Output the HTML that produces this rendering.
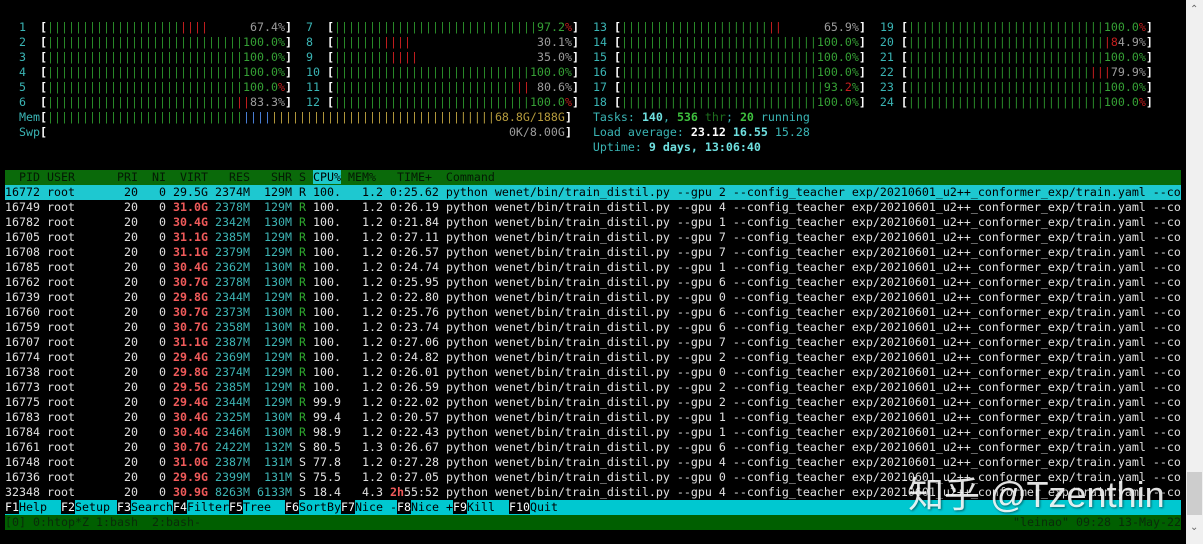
<!DOCTYPE html>
<html><head><meta charset="utf-8"><style>
html,body{margin:0;padding:0;background:#000;width:1203px;height:544px;overflow:hidden;position:relative}
.term{position:absolute;left:5px;top:5px;font-family:"DejaVu Sans Mono","Liberation Mono",monospace;font-size:11.63px;line-height:15px;color:#e0e0e0}
.l{height:15px;white-space:pre;width:1176px;overflow:hidden}
.g{color:#2a8c2a}.r{color:#c41e1e}.t{color:#9c9c9c}.c{color:#3ab4b4}.w{color:#fff;font-weight:bold}
.b{color:#4a80d8}.y{color:#b49a3c}.gt{color:#35a035}.yt{color:#b49a3c}
.cb{color:#6fe0e0;font-weight:bold}.gb{color:#3ec03e;font-weight:bold}.gd{color:#1e6e1e}.wb{color:#fff;font-weight:bold}
.v{color:#f05a5a;font-weight:bold}.m{color:#3cb4b4}.rg{color:#2ea82e}
.hdr{background:#0a6a0a;color:#041a04}.hc{background:#1ec8c8;color:#000}
.sel{background:#1ec8d0;color:#000}
.fk{color:#fff}.fl{background:#00c8d0;color:#000}
.tm{background:#005f00;color:#0a2a0a;display:flex;justify-content:space-between}
.sb{position:absolute;left:1186px;top:0;width:17px;height:544px;background:#f0f0f0}
.wm{position:absolute;left:908px;top:466px;font-family:"Liberation Sans","Noto Sans CJK SC",sans-serif;font-size:36px;color:rgba(255,255,255,0.88);text-shadow:1px 1px 2px rgba(0,0,0,0.5);white-space:nowrap}
</style></head><body>
<div class="term">
<div class="l"> </div>
<div class="l">  <span class="c">1</span>  <span class="w">[</span><span class="g">|||||||||||||||||||</span><span class="r">||||</span>      <span class="t">67.4%</span><span class="w">]</span>  <span class="c">7</span>  <span class="w">[</span><span class="g">|||||||||||||||||||||||||||||</span><span class="gt">97.2</span><span class="r">%</span><span class="w">]</span>  <span class="c">13</span> <span class="w">[</span><span class="g">|||||||||||||||||||||</span><span class="r">||</span>      <span class="t">65.9%</span><span class="w">]</span>  <span class="c">19</span> <span class="w">[</span><span class="g">||||||||||||||||||||||||||||</span><span class="gt">100.0</span><span class="r">%</span><span class="w">]</span></div>
<div class="l">  <span class="c">2</span>  <span class="w">[</span><span class="g">||||||||||||||||||||||||||||</span><span class="gt">100.0%</span><span class="w">]</span>  <span class="c">8</span>  <span class="w">[</span><span class="g">|||||||</span><span class="r">||||</span>                  <span class="t">30.1%</span><span class="w">]</span>  <span class="c">14</span> <span class="w">[</span><span class="g">||||||||||||||||||||||||||||</span><span class="gt">100.0%</span><span class="w">]</span>  <span class="c">20</span> <span class="w">[</span><span class="g">||||||||||||||||||||||||||||</span><span class="r">|8</span><span class="t">4.9%</span><span class="w">]</span></div>
<div class="l">  <span class="c">3</span>  <span class="w">[</span><span class="g">||||||||||||||||||||||||||||</span><span class="gt">100.0%</span><span class="w">]</span>  <span class="c">9</span>  <span class="w">[</span><span class="g">||||||||</span><span class="r">||||</span>                 <span class="t">35.0%</span><span class="w">]</span>  <span class="c">15</span> <span class="w">[</span><span class="g">||||||||||||||||||||||||||||</span><span class="gt">100.0%</span><span class="w">]</span>  <span class="c">21</span> <span class="w">[</span><span class="g">||||||||||||||||||||||||||||</span><span class="gt">100.0%</span><span class="w">]</span></div>
<div class="l">  <span class="c">4</span>  <span class="w">[</span><span class="g">||||||||||||||||||||||||||||</span><span class="gt">100.0%</span><span class="w">]</span>  <span class="c">10</span> <span class="w">[</span><span class="g">||||||||||||||||||||||||||||</span><span class="gt">100.0%</span><span class="w">]</span>  <span class="c">16</span> <span class="w">[</span><span class="g">||||||||||||||||||||||||||||</span><span class="gt">100.0%</span><span class="w">]</span>  <span class="c">22</span> <span class="w">[</span><span class="g">||||||||||||||||||||||||||</span><span class="r">|||</span><span class="t">79.9%</span><span class="w">]</span></div>
<div class="l">  <span class="c">5</span>  <span class="w">[</span><span class="g">||||||||||||||||||||||||||||</span><span class="gt">100.0</span><span class="r">%</span><span class="w">]</span>  <span class="c">11</span> <span class="w">[</span><span class="g">||||||||||||||||||||||||||</span><span class="r">||</span> <span class="t">80.6%</span><span class="w">]</span>  <span class="c">17</span> <span class="w">[</span><span class="g">|||||||||||||||||||||||||||||</span><span class="gt">93.</span><span class="r">2</span><span class="gt">%</span><span class="w">]</span>  <span class="c">23</span> <span class="w">[</span><span class="g">||||||||||||||||||||||||||||</span><span class="gt">100.0%</span><span class="w">]</span></div>
<div class="l">  <span class="c">6</span>  <span class="w">[</span><span class="g">|||||||||||||||||||||||||||</span><span class="r">||</span><span class="t">83.3%</span><span class="w">]</span>  <span class="c">12</span> <span class="w">[</span><span class="g">||||||||||||||||||||||||||||</span><span class="gt">100.0</span><span class="r">%</span><span class="w">]</span>  <span class="c">18</span> <span class="w">[</span><span class="g">||||||||||||||||||||||||||||</span><span class="gt">100.0%</span><span class="w">]</span>  <span class="c">24</span> <span class="w">[</span><span class="g">||||||||||||||||||||||||||||</span><span class="gt">100.0</span><span class="r">%</span><span class="w">]</span></div>
<div class="l">  <span class="c">Mem</span><span class="w">[</span><span class="g">||||||||||||||||||||||||||||</span><span class="b">||||</span><span class="y">||||||||||||||||||||||||||||||||</span><span class="yt">68.8G/188G</span><span class="w">]</span>   <span class="c">Tasks: </span><span class="cb">140</span><span class="c">, </span><span class="gb">536</span><span class="gd"> thr</span><span class="c">; </span><span class="gb">20</span><span class="c"> running</span></div>
<div class="l">  <span class="c">Swp</span><span class="w">[</span>                                                                  <span class="t">0K/8.00G</span><span class="w">]</span>   <span class="c">Load average: </span><span class="wb">23.12 </span><span class="cb">16.55 </span><span class="c">15.28</span></div>
<div class="l">                                                                                    <span class="c">Uptime: </span><span class="cb">9 days, 13:06:40</span></div>
<div class="l"> </div>
<div class="l hdr">  PID USER      PRI  NI  VIRT   RES   SHR S <span class="hc">CPU%</span> MEM%   TIME+  Command</div>
<div class="l sel">16772 root       20   0 29.5G 2374M  129M R 100.   1.2 0:25.62 python wenet/bin/train_distil.py --gpu 2 --config_teacher exp/20210601_u2++_conformer_exp/train.yaml --co</div>
<div class="l">16749 root       20   0 <span class="v">31.0G</span> <span class="m">2378M</span>  <span class="m">129M</span> <span class="rg">R</span> 100.   1.2 0:26.19 python wenet/bin/train_distil.py --gpu 4 --config_teacher exp/20210601_u2++_conformer_exp/train.yaml --co</div>
<div class="l">16782 root       20   0 <span class="v">30.4G</span> <span class="m">2342M</span>  <span class="m">130M</span> <span class="rg">R</span> 100.   1.2 0:21.84 python wenet/bin/train_distil.py --gpu 1 --config_teacher exp/20210601_u2++_conformer_exp/train.yaml --co</div>
<div class="l">16705 root       20   0 <span class="v">31.1G</span> <span class="m">2385M</span>  <span class="m">129M</span> <span class="rg">R</span> 100.   1.2 0:27.11 python wenet/bin/train_distil.py --gpu 7 --config_teacher exp/20210601_u2++_conformer_exp/train.yaml --co</div>
<div class="l">16708 root       20   0 <span class="v">31.1G</span> <span class="m">2379M</span>  <span class="m">129M</span> <span class="rg">R</span> 100.   1.2 0:26.57 python wenet/bin/train_distil.py --gpu 7 --config_teacher exp/20210601_u2++_conformer_exp/train.yaml --co</div>
<div class="l">16785 root       20   0 <span class="v">30.4G</span> <span class="m">2362M</span>  <span class="m">130M</span> <span class="rg">R</span> 100.   1.2 0:24.74 python wenet/bin/train_distil.py --gpu 1 --config_teacher exp/20210601_u2++_conformer_exp/train.yaml --co</div>
<div class="l">16762 root       20   0 <span class="v">30.7G</span> <span class="m">2378M</span>  <span class="m">130M</span> <span class="rg">R</span> 100.   1.2 0:25.95 python wenet/bin/train_distil.py --gpu 6 --config_teacher exp/20210601_u2++_conformer_exp/train.yaml --co</div>
<div class="l">16739 root       20   0 <span class="v">29.8G</span> <span class="m">2344M</span>  <span class="m">129M</span> <span class="rg">R</span> 100.   1.2 0:22.80 python wenet/bin/train_distil.py --gpu 0 --config_teacher exp/20210601_u2++_conformer_exp/train.yaml --co</div>
<div class="l">16760 root       20   0 <span class="v">30.7G</span> <span class="m">2373M</span>  <span class="m">130M</span> <span class="rg">R</span> 100.   1.2 0:25.76 python wenet/bin/train_distil.py --gpu 6 --config_teacher exp/20210601_u2++_conformer_exp/train.yaml --co</div>
<div class="l">16759 root       20   0 <span class="v">30.7G</span> <span class="m">2358M</span>  <span class="m">130M</span> <span class="rg">R</span> 100.   1.2 0:23.74 python wenet/bin/train_distil.py --gpu 6 --config_teacher exp/20210601_u2++_conformer_exp/train.yaml --co</div>
<div class="l">16707 root       20   0 <span class="v">31.1G</span> <span class="m">2387M</span>  <span class="m">129M</span> <span class="rg">R</span> 100.   1.2 0:27.06 python wenet/bin/train_distil.py --gpu 7 --config_teacher exp/20210601_u2++_conformer_exp/train.yaml --co</div>
<div class="l">16774 root       20   0 <span class="v">29.4G</span> <span class="m">2369M</span>  <span class="m">129M</span> <span class="rg">R</span> 100.   1.2 0:24.82 python wenet/bin/train_distil.py --gpu 2 --config_teacher exp/20210601_u2++_conformer_exp/train.yaml --co</div>
<div class="l">16738 root       20   0 <span class="v">29.8G</span> <span class="m">2374M</span>  <span class="m">129M</span> <span class="rg">R</span> 100.   1.2 0:26.01 python wenet/bin/train_distil.py --gpu 0 --config_teacher exp/20210601_u2++_conformer_exp/train.yaml --co</div>
<div class="l">16773 root       20   0 <span class="v">29.5G</span> <span class="m">2385M</span>  <span class="m">129M</span> <span class="rg">R</span> 100.   1.2 0:26.59 python wenet/bin/train_distil.py --gpu 2 --config_teacher exp/20210601_u2++_conformer_exp/train.yaml --co</div>
<div class="l">16775 root       20   0 <span class="v">29.4G</span> <span class="m">2344M</span>  <span class="m">129M</span> <span class="rg">R</span> 99.9   1.2 0:22.02 python wenet/bin/train_distil.py --gpu 2 --config_teacher exp/20210601_u2++_conformer_exp/train.yaml --co</div>
<div class="l">16783 root       20   0 <span class="v">30.4G</span> <span class="m">2325M</span>  <span class="m">130M</span> <span class="rg">R</span> 99.4   1.2 0:20.57 python wenet/bin/train_distil.py --gpu 1 --config_teacher exp/20210601_u2++_conformer_exp/train.yaml --co</div>
<div class="l">16784 root       20   0 <span class="v">30.4G</span> <span class="m">2346M</span>  <span class="m">130M</span> <span class="rg">R</span> 98.9   1.2 0:22.43 python wenet/bin/train_distil.py --gpu 1 --config_teacher exp/20210601_u2++_conformer_exp/train.yaml --co</div>
<div class="l">16761 root       20   0 <span class="v">30.7G</span> <span class="m">2422M</span>  <span class="m">132M</span> S 80.5   1.3 0:26.67 python wenet/bin/train_distil.py --gpu 6 --config_teacher exp/20210601_u2++_conformer_exp/train.yaml --co</div>
<div class="l">16748 root       20   0 <span class="v">31.0G</span> <span class="m">2387M</span>  <span class="m">131M</span> S 77.8   1.2 0:27.28 python wenet/bin/train_distil.py --gpu 4 --config_teacher exp/20210601_u2++_conformer_exp/train.yaml --co</div>
<div class="l">16736 root       20   0 <span class="v">29.9G</span> <span class="m">2399M</span>  <span class="m">131M</span> S 75.5   1.2 0:27.05 python wenet/bin/train_distil.py --gpu 0 --config_teacher exp/20210601_u2++_conformer_exp/train.yaml --co</div>
<div class="l">32348 root       20   0 <span class="v">30.9G</span> <span class="m">8263M</span> <span class="m">6133M</span> S 18.4   4.3 <span class="v">2h</span>55:52 python wenet/bin/train_distil.py --gpu 4 --config_teacher exp/20210601_u2++_conformer_exp/train.yaml --co</div>
<div class="l fl"><span class="fk" style="background:#000">F1</span>Help  <span class="fk" style="background:#000">F2</span>Setup <span class="fk" style="background:#000">F3</span>Search<span class="fk" style="background:#000">F4</span>Filter<span class="fk" style="background:#000">F5</span>Tree  <span class="fk" style="background:#000">F6</span>SortBy<span class="fk" style="background:#000">F7</span>Nice -<span class="fk" style="background:#000">F8</span>Nice +<span class="fk" style="background:#000">F9</span>Kill  <span class="fk" style="background:#000">F10</span>Quit</div>
<div class="l tm"><span>[0] 0:htop*Z 1:bash  2:bash-</span><span>"leinao" 09:28 13-May-22</span></div>
</div>
<div class="sb">
<div style="position:absolute;left:4px;top:4px;font:10px 'DejaVu Sans',sans-serif;color:#666">&#8963;</div>
<div style="position:absolute;left:1px;top:472px;width:15px;height:43px;background:#cdcdcd"></div>
<div style="position:absolute;left:4px;top:522px;font:10px 'DejaVu Sans',sans-serif;color:#666">&#8964;</div>
</div>
<div class="wm">知乎 @Tzenthin</div>
</body></html>
